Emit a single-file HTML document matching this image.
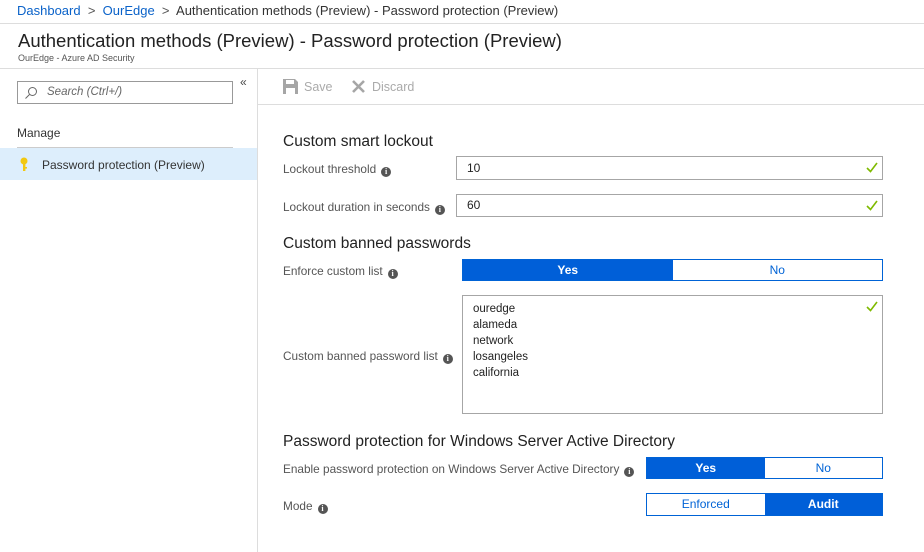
<!DOCTYPE html>
<html><head><meta charset="utf-8"><style>
*{margin:0;padding:0;box-sizing:border-box}
body{width:924px;height:552px;overflow:hidden;background:#fff;font-family:"Liberation Sans",sans-serif;color:#333;position:relative}
.a{position:absolute;white-space:nowrap}
.lbl{font-size:11.8px;color:#555}
.h{font-size:15.5px;color:#222}
.inp{position:absolute;border:1px solid #a6a6a6;background:#fff;font-size:12px;color:#222;padding-left:10px}
.chk{position:absolute;right:4px;top:3px}
.i{display:inline-block;width:10px;height:10px;border-radius:50%;background:#555;color:#fff;font-size:8px;font-weight:bold;text-align:center;line-height:10px;margin-left:5px;vertical-align:-1px;font-family:"Liberation Serif",serif}
.tg{position:absolute;display:flex;border:1px solid #0063d6;font-size:12px}
.tg div{flex:1;text-align:center}
.on{background:#005fd8;color:#fff;font-weight:bold}
.off{color:#0063d6;background:#fff}
</style></head><body>
<div class="a" style="left:17px;top:3px;font-size:13px;color:#555"><span style="color:#0a62c9">Dashboard</span> &nbsp;&gt;&nbsp; <span style="color:#0a62c9">OurEdge</span> &nbsp;&gt;&nbsp; <span style="color:#333">Authentication methods (Preview) - Password protection (Preview)</span></div>
<div class="a" style="left:0;top:23px;width:924px;height:1px;background:#ddd"></div>
<div class="a" style="left:18px;top:30px;font-size:18.5px;color:#222">Authentication methods (Preview) - Password protection (Preview)</div>
<div class="a" style="left:18px;top:53px;font-size:9px;color:#555">OurEdge - Azure AD Security</div>
<div class="a" style="left:0;top:68px;width:924px;height:1px;background:#ddd"></div>
<div class="a" style="left:257px;top:69px;width:1px;height:483px;background:#ddd"></div>
<div class="a" style="left:17px;top:81px;width:216px;height:23px;border:1px solid #999"></div>
<svg class="a" style="left:24px;top:86px" width="14" height="14"><circle cx="8.5" cy="5.5" r="4" fill="none" stroke="#666" stroke-width="1"/><line x1="5.5" y1="8.5" x2="1.5" y2="12.5" stroke="#666"/></svg>
<div class="a" style="left:47px;top:86px;font-size:11.5px;font-style:italic;color:#666">Search (Ctrl+/)</div>
<div class="a" style="left:240px;top:75px;font-size:12px;color:#444">«</div>
<div class="a" style="left:17px;top:126px;font-size:12px;color:#333">Manage</div>
<div class="a" style="left:17px;top:147px;width:216px;height:1px;background:#ccc"></div>
<div class="a" style="left:0;top:148px;width:257px;height:32px;background:#ddeefc"></div>
<svg class="a" style="left:19px;top:157px" width="10" height="16"><circle cx="5" cy="4" r="3.5" fill="#f2c811"/><rect x="4" y="6" width="2.4" height="8" fill="#f2c811"/><rect x="6" y="10" width="2" height="1.6" fill="#f2c811"/></svg>
<div class="a" style="left:42px;top:158px;font-size:12px;color:#333">Password protection (Preview)</div>
<svg class="a" style="left:283px;top:79px" width="15" height="15"><path d="M0 0h12l3 3v12H0z" fill="#a6a6a6"/><rect x="3" y="1" width="8" height="4" fill="#fff"/><rect x="3" y="9" width="9" height="6" fill="#fff"/></svg>
<div class="a" style="left:304px;top:80px;font-size:12.5px;color:#aaa">Save</div>
<svg class="a" style="left:352px;top:80px" width="13" height="13"><path d="M1 1L12 12M12 1L1 12" stroke="#a6a6a6" stroke-width="2.6"/></svg>
<div class="a" style="left:372px;top:80px;font-size:12.5px;color:#aaa">Discard</div>
<div class="a" style="left:258px;top:104px;width:666px;height:1px;background:#ddd"></div>
<div class="a h" style="left:283px;top:133px">Custom smart lockout</div>
<div class="a lbl" style="left:283px;top:162px">Lockout threshold<span class="i">i</span></div>
<div class="inp" style="left:456px;top:156px;width:427px;height:24px;line-height:22px">10<svg class="chk" width="12" height="14"><path d="M1 8l3.5 3.5L11 3" fill="none" stroke="#7fba00" stroke-width="1.6"/></svg></div>
<div class="a lbl" style="left:283px;top:200px">Lockout duration in seconds<span class="i">i</span></div>
<div class="inp" style="left:456px;top:194px;width:427px;height:23px;line-height:21px">60<svg class="chk" width="12" height="14"><path d="M1 8l3.5 3.5L11 3" fill="none" stroke="#7fba00" stroke-width="1.6"/></svg></div>
<div class="a h" style="left:283px;top:235px">Custom banned passwords</div>
<div class="a lbl" style="left:283px;top:264px">Enforce custom list<span class="i">i</span></div>
<div class="tg" style="left:462px;top:259px;width:421px;height:22px;line-height:20px"><div class="on">Yes</div><div class="off">No</div></div>
<div class="inp" style="left:462px;top:295px;width:421px;height:119px;padding-top:5px;line-height:16px;font-size:11.5px">ouredge<br>alameda<br>network<br>losangeles<br>california<svg class="chk" width="12" height="14"><path d="M1 8l3.5 3.5L11 3" fill="none" stroke="#7fba00" stroke-width="1.6"/></svg></div>
<div class="a lbl" style="left:283px;top:349px">Custom banned password list<span class="i">i</span></div>
<div class="a h" style="left:283px;top:433px">Password protection for Windows Server Active Directory</div>
<div class="a lbl" style="left:283px;top:462px">Enable password protection on Windows Server Active Directory<span class="i">i</span></div>
<div class="tg" style="left:646px;top:457px;width:237px;height:22px;line-height:20px"><div class="on">Yes</div><div class="off">No</div></div>
<div class="a lbl" style="left:283px;top:499px">Mode<span class="i">i</span></div>
<div class="tg" style="left:646px;top:493px;width:237px;height:23px;line-height:21px"><div class="off">Enforced</div><div class="on">Audit</div></div>
</body></html>
